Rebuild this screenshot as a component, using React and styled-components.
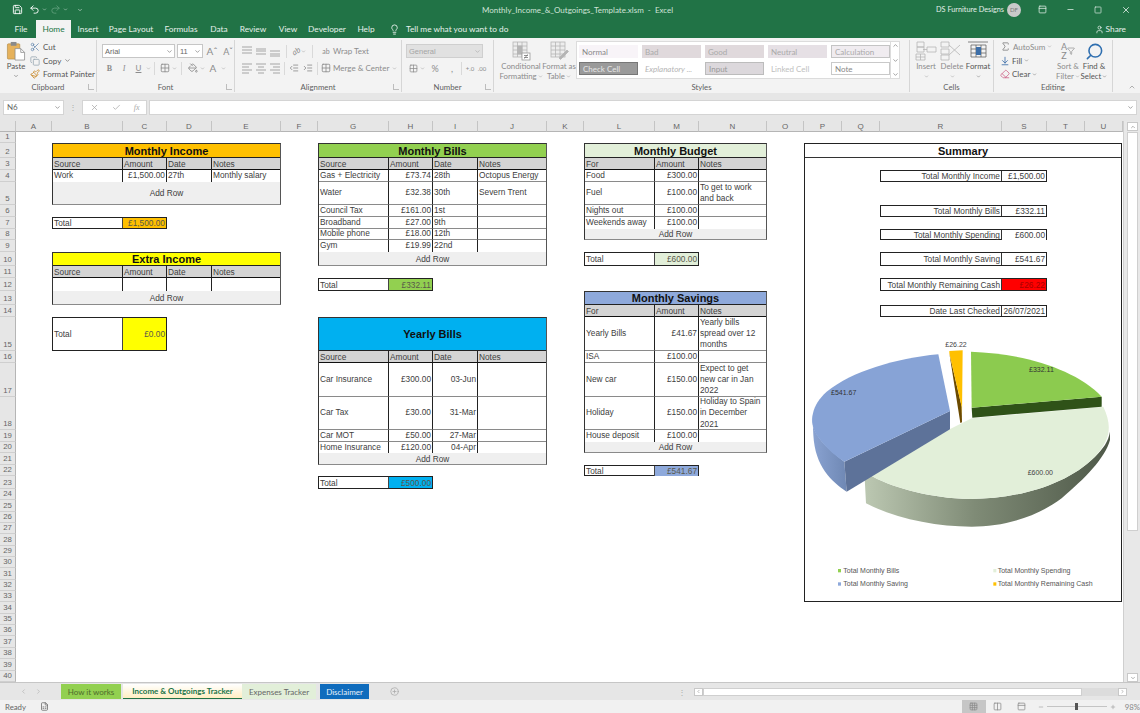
import React from 'react'
import styled, { createGlobalStyle } from 'styled-components'
import {
  Save, Undo2, Redo2, Lightbulb, Scissors, Copy, Paintbrush, ChevronDown, ChevronUp, X, Check, Minus, Plus,
  User, Grid2x2, PaintBucket, IndentDecrease, IndentIncrease, Sigma, ArrowDownToLine, Eraser, Search, Square,
  Columns2, Grid3x3, ChevronLeft, ChevronRight, CirclePlus, PanelTop, FileSpreadsheet, Filter,
} from 'lucide-react'

const Global = createGlobalStyle`
  html, body { margin: 0; padding: 0; background: #fff; }
  * { box-sizing: border-box; }
`

const Page = styled.div`
  width: 1140px;
  height: 713px;
  overflow: hidden;
  display: flex;
  flex-direction: column;
  font-family: Lato, "Open Sans", "Liberation Sans", sans-serif;
`

const TitleBar = styled.div`
  height: 19px;
  background: #217346;
  color: #cfe3d7;
  display: flex;
  align-items: center;
  font-size: 8px;
`

const Qat = styled.div`
  width: 483px;
  display: flex;
  align-items: center;
  padding-left: 9px;
  color: #fff;
`

const DocName = styled.div`
  width: 455px;
  white-space: pre;
`

const WindowTools = styled.div`
  flex: 1;
  display: flex;
  align-items: center;
  color: #e3efe8;
  white-space: nowrap;
`

const UserName = styled.div`
  width: 65px;
  font-size: 7.3px;
`

const Avatar = styled.div`
  width: 14px;
  height: 14px;
  border-radius: 50%;
  background: #c9c9c9;
  color: #777;
  font-size: 6px;
  display: flex;
  align-items: center;
  justify-content: center;
  margin: 0 7px 0 6px;
`

const WinBtn = styled.div`
  width: 28px;
  display: flex;
  justify-content: center;
`

const TabStrip = styled.div`
  height: 19px;
  background: #217346;
  display: flex;
  align-items: flex-end;
  padding-left: 6px;
  color: #e6f0ea;
  font-size: 8.3px;
`

const RibbonTab = styled.div`
  height: 18px;
  display: flex;
  align-items: center;
  justify-content: center;
  width: ${p => p.$w}px;
  background: ${p => (p.$active ? '#f3f3f3' : 'transparent')};
  color: ${p => (p.$active ? '#217346' : 'inherit')};
  white-space: nowrap;
`

const TellMe = styled.div`
  display: flex;
  align-items: center;
  gap: 6px;
  height: 18px;
  margin-left: 8px;
  flex: 1;
`

const ShareBtn = styled.div`
  display: flex;
  align-items: center;
  gap: 2px;
  height: 18px;
  margin-right: 14px;
`

const Ribbon = styled.div`
  height: 55px;
  background: #f3f3f3;
  display: flex;
  color: #8c8c8c;
  font-size: 8px;
`

const Group = styled.div`
  position: relative;
  width: ${p => p.$w}px;
  flex: none;
  border-right: 1px solid #d6d6d6;
  margin: 2px 0 1px;
  display: flex;
  flex-direction: column;
`

const GroupBody = styled.div`
  height: 41px;
  display: flex;
  padding: 4px 0 0 ${p => p.$pad || 0}px;
  gap: ${p => p.$gap || 0}px;
`

const GroupLabel = styled.div`
  flex: 1;
  display: flex;
  align-items: center;
  justify-content: center;
  color: #5f5f5f;
  font-size: 7.8px;
`

const Launcher = styled.div`
  position: absolute;
  right: 2px;
  bottom: 2px;
  width: 6px;
  height: 6px;
  border-left: 1px solid #bdbdbd;
  border-bottom: 1px solid #bdbdbd;
`

const Collapse = styled.div`
  align-self: flex-end;
  margin: 0 0 2px 15px;
  color: #8c8c8c;
  display: flex;
`

const Stack = styled.div`
  display: flex;
  flex-direction: column;
  gap: ${p => p.$gap ?? 3}px;
  margin-top: ${p => p.$top || 0}px;
  width: ${p => (p.$w ? `${p.$w}px` : 'auto')};
  flex: none;
`

const ToolRow = styled.div`
  display: flex;
  align-items: center;
  height: 14px;
  gap: ${p => p.$gap || 0}px;
  color: ${p => (p.$on ? '#555' : 'inherit')};
  white-space: nowrap;
`

const Tool = styled.div`
  width: ${p => p.$w || 14}px;
  flex: none;
  display: flex;
  align-items: center;
  justify-content: center;
  font-family: ${p => (p.$serif ? '"Liberation Serif", serif' : 'inherit')};
  font-weight: ${p => (p.$bold ? 700 : 400)};
  font-style: ${p => (p.$italic ? 'italic' : 'normal')};
  text-decoration: ${p => (p.$under ? 'underline' : 'none')};
  font-size: ${p => p.$size || 8}px;
`

const OrientTool = styled(Tool)`
  transform: rotate(-35deg);
`

const Sep = styled.div`
  width: 1px;
  height: 13px;
  flex: none;
  background: #d9d9d9;
  margin: 0 ${p => p.$m ?? 3}px;
`

const Select = styled.div`
  width: ${p => p.$w}px;
  height: 14px;
  flex: none;
  border: 1px solid ${p => (p.$off ? '#cfcfcf' : '#c6c6c6')};
  background: ${p => (p.$off ? '#e1e1e1' : '#fff')};
  color: ${p => (p.$off ? '#a5a5a5' : '#666')};
  display: flex;
  align-items: center;
  justify-content: space-between;
  padding: 0 1px 0 2px;
  font-family: "Liberation Sans", sans-serif;
  font-size: 7.5px;
`

const BigTool = styled.div`
  width: ${p => p.$w}px;
  flex: none;
  margin-top: -3px;
  display: flex;
  flex-direction: column;
  align-items: center;
  line-height: 9.5px;
  font-size: 7.8px;
  white-space: nowrap;
  color: ${p => (p.$on ? '#555' : 'inherit')};
`

const BigIcon = styled.div`
  height: 20px;
  display: flex;
  align-items: center;
  justify-content: center;
  margin-bottom: 1px;
`

const BigLine = styled.div`
  height: 9.5px;
  display: flex;
  align-items: center;
  justify-content: center;
  gap: 1px;
`

const SortLetters = styled.div`
  display: flex;
  flex-direction: column;
  align-items: center;
  font-size: 9px;
  line-height: 9px;
`

const FlippedSearch = styled(Search)`
  transform: scaleX(-1);
`

const Gallery = styled.div`
  width: 324px;
  height: 38px;
  flex: none;
  background: #fff;
  border: 1px solid #dcdcdc;
  display: flex;
  margin-top: -3px;
`

const GalleryGrid = styled.div`
  flex: 1;
  display: grid;
  grid-template-columns: repeat(5, 59px);
  grid-template-rows: 13px 13px;
  column-gap: 4px;
  row-gap: 4px;
  padding: 3px 0 0 2px;
`

const StyleCell = styled.div`
  font-size: 8px;
  display: flex;
  align-items: center;
  padding-left: 3px;
  overflow: hidden;
  white-space: nowrap;
  background: ${p => p.$bg || '#fff'};
  color: ${p => p.$fg || '#aaa'};
  border: ${p => (p.$line ? `1px solid ${p.$line}` : 'none')};
  font-style: ${p => (p.$italic ? 'italic' : 'normal')};
`

const GalleryScroll = styled.div`
  width: 10px;
  border-left: 1px solid #dcdcdc;
  display: flex;
  flex-direction: column;
  align-items: center;
  justify-content: space-between;
  color: #666;
`

const FormulaBar = styled.div`
  height: 28px;
  background: #e6e6e6;
  display: flex;
  align-items: center;
  padding: 0 3px;
  color: #666;
  font-size: 8px;
`

const NameBox = styled.div`
  width: 61px;
  height: 15px;
  background: #fff;
  border: 1px solid #d4d4d4;
  display: flex;
  align-items: center;
  justify-content: space-between;
  padding: 0 2px 0 3px;
`

const Dots = styled.div`
  width: 18px;
  text-align: center;
  color: #aaa;
`

const FnBox = styled.div`
  width: 65px;
  height: 15px;
  background: #fff;
  border: 1px solid #d4d4d4;
  display: flex;
  align-items: center;
  justify-content: space-around;
  color: #a8a8a8;
  font-family: "Liberation Serif", serif;
  font-style: italic;
  margin-right: 2px;
`

const FormulaInput = styled.div`
  flex: 1;
  height: 15px;
  background: #fff;
  border: 1px solid #d4d4d4;
  display: flex;
  align-items: center;
  justify-content: flex-end;
  padding-right: 2px;
`

const SheetArea = styled.div`
  height: 561px;
  display: flex;
  background: #fff;
`

const SheetGrid = styled.div`
  display: grid;
  grid-template-columns: 16px 36px 71px 44px 45px 69px 37px 71px 44px 45px 69px 37px 71px 44px 68px 37px 38px 38px 122px 45px 38px 38px;
  grid-template-rows: 11px 11px 15px 12px 12px 23px 12px 12px 11px 12px 14px 12px 13px 14px 12px 34px 12px 34px 33px 12px 11px 12px 11px 13px repeat(17, 11.35px);
  font-family: "Liberation Sans", sans-serif;
  font-size: 8.3px;
  color: #404040;
`

const ColHead = styled.div`
  grid-row: 1;
  background: #e6e6e6;
  border-right: 1px solid #c4c4c4;
  border-bottom: 1px solid #b5b5b5;
  color: #666;
  font-size: 8px;
  display: flex;
  align-items: center;
  justify-content: center;
`

const Corner = styled(ColHead)`
  grid-column: 1;
`

const RowHead = styled.div`
  grid-column: 1;
  grid-row: ${p => p.$n + 1};
  background: #e6e6e6;
  border-right: 1px solid #b5b5b5;
  border-bottom: 1px solid #cfcfcf;
  color: #666;
  font-size: 7.8px;
  line-height: 10px;
  display: flex;
  align-items: flex-end;
  justify-content: center;
`

const TableBlock = styled.div`
  grid-column: ${p => p.$col} / span ${p => p.$cols};
  grid-row: ${p => p.$row} / span ${p => p.$rows};
  display: grid;
  grid-template-columns: subgrid;
  grid-template-rows: subgrid;
  border: 1px solid #333;
  border-bottom-color: #8a8a8a;
  border-right-color: #555;
`

const TitleCell = styled.div`
  grid-column: 1 / -1;
  background: ${p => p.$bg};
  border-bottom: 1px solid #222;
  color: #111;
  font-size: 11px;
  font-weight: 700;
  display: flex;
  align-items: center;
  justify-content: center;
`

const HeadCell = styled.div`
  background: #d4d4d4;
  border-bottom: 1px solid #111;
  border-right: ${p => (p.$last ? 'none' : '1px solid #222')};
  padding: 0 1px;
  display: flex;
  align-items: center;
  white-space: nowrap;
`

const Cell = styled.div`
  background: #fff;
  border-right: ${p => (p.$last ? 'none' : '1px solid #222')};
  border-bottom: ${p => (p.$end ? 'none' : '1px solid #8a8a8a')};
  padding: 0 1px;
  display: flex;
  align-items: center;
  justify-content: ${p => (p.$right ? 'flex-end' : 'flex-start')};
  line-height: 11.2px;
  overflow: hidden;
`

const AddRow = styled.div`
  grid-column: 1 / -1;
  background: #efefef;
  display: flex;
  align-items: center;
  justify-content: center;
`

const TotalBlock = styled.div`
  grid-column: ${p => p.$col} / span 2;
  grid-row: ${p => p.$row};
  display: grid;
  grid-template-columns: subgrid;
  border: 1px solid #222;
`

const TotalLabel = styled.div`
  border-right: 1px solid #444;
  padding: 0 1px;
  display: flex;
  align-items: center;
`

const TotalValue = styled.div`
  background: ${p => p.$bg};
  color: #58584a;
  padding: 0 1px;
  display: flex;
  align-items: center;
  justify-content: flex-end;
`

const Summary = styled.div`
  grid-column: 17 / span 6;
  grid-row: 3 / span 32;
  display: grid;
  grid-template-columns: subgrid;
  grid-template-rows: subgrid;
  border: 1px solid #222;
  margin-right: 1px;
`

const SummaryTitle = styled.div`
  grid-column: 1 / -1;
  grid-row: 1;
  border-bottom: 1px solid #333;
  color: #111;
  font-size: 11px;
  font-weight: 700;
  display: flex;
  align-items: center;
  justify-content: center;
`

const SummaryLine = styled.div`
  grid-column: 3 / span 2;
  grid-row: ${p => p.$line};
  display: grid;
  grid-template-columns: subgrid;
  border: 1px solid #222;
`

const SummaryLabel = styled.div`
  border-right: 1px solid #333;
  padding-right: 1px;
  display: flex;
  align-items: center;
  justify-content: flex-end;
`

const SummaryValue = styled.div`
  background: ${p => p.$bg || '#fff'};
  color: ${p => p.$fg || '#404040'};
  padding-right: 1px;
  display: flex;
  align-items: center;
  justify-content: flex-end;
`

const ChartWrap = styled.svg`
  grid-column: 1 / -1;
  grid-row: 14 / -1;
  align-self: end;
  width: 316px;
  height: 266px;
  font-family: "Liberation Sans", sans-serif;
  font-size: 21px;
`

const VScroll = styled.div`
  flex: 1;
  background: #e8e8e8;
  border-left: 1px solid #cfcfcf;
  display: flex;
  flex-direction: column;
  padding: 1px 2px 0 3px;
`

const ScrollBtn = styled.div`
  height: ${p => p.$h || 9}px;
  width: ${p => p.$w || 'auto'};
  flex: none;
  background: #fff;
  border: 1px solid #c8c8c8;
  display: flex;
  align-items: center;
  justify-content: center;
  color: #666;
`

const VThumb = styled.div`
  height: 399px;
  margin-top: 1px;
  background: #fff;
  border: 1px solid #cfcfcf;
`

const VTrack = styled.div`
  flex: 1;
`

const SheetTabs = styled.div`
  height: 18px;
  background: #e6e6e6;
  border-top: 1px solid #c6c6c6;
  display: flex;
  align-items: center;
  font-size: 8px;
  color: #aaa;
`

const TabNav = styled.div`
  width: 61px;
  display: flex;
  justify-content: center;
  gap: 8px;
`

const SheetTab = styled.div`
  width: ${p => p.$w}px;
  height: 15px;
  margin-right: ${p => p.$gap || 0}px;
  flex: none;
  background: ${p => p.$bg};
  color: ${p => p.$fg};
  font-weight: ${p => (p.$active ? 700 : 400)};
  border-bottom: ${p => (p.$active ? '1px solid #217346' : 'none')};
  display: flex;
  align-items: center;
  justify-content: center;
  white-space: nowrap;
`

const AddSheet = styled.div`
  margin-left: 21px;
  width: 304px;
  padding-right: 8px;
  display: flex;
  align-items: center;
  justify-content: space-between;
`

const HScroll = styled.div`
  width: 433px;
  height: 8px;
  display: flex;
  background: #dcdcdc;
`

const HThumb = styled.div`
  width: 379px;
  background: #fff;
  border: 1px solid #cfcfcf;
`

const HTrack = styled.div`
  flex: 1;
`

const StatusBar = styled.div`
  height: 13px;
  flex: 1;
  background: #f1f1f1;
  display: flex;
  align-items: center;
  color: #666;
  font-size: 7.8px;
  padding-left: 5px;
`

const StatusLeft = styled.div`
  width: 957px;
  display: flex;
  align-items: center;
  gap: 14px;
`

const ViewBtn = styled.div`
  width: ${p => p.$w || 24}px;
  height: 13px;
  background: ${p => (p.$on ? '#c6c6c6' : 'transparent')};
  display: flex;
  align-items: center;
  justify-content: center;
  color: #8a8a8a;
`

const Zoom = styled.div`
  display: flex;
  align-items: center;
  margin-left: 4px;
  color: #888;
  gap: 3px;
`

const ZoomValue = styled.span`
  margin-left: 6px;
`

const Slider = styled.div`
  width: 60px;
  height: 1px;
  background: #c4c4c4;
  display: flex;
  justify-content: center;
  align-items: center;
`

const SliderKnob = styled.div`
  width: 3px;
  height: 7px;
  background: #555;
`

const cols = ['A', 'B', 'C', 'D', 'E', 'F', 'G', 'H', 'I', 'J', 'K', 'L', 'M', 'N', 'O', 'P', 'Q', 'R', 'S', 'T', 'U']
const rowNumbers = Array.from({ length: 40 }, (_, i) => i + 1)

const orange = '#ffc000'
const yellow = '#ffff00'
const green = '#92d050'
const sky = '#00b0f0'
const pale = '#e2efd9'
const blue = '#8ea9db'

const tables = [
  {
    col: 3, row: 3, title: 'Monthly Income', color: orange,
    heads: ['Source', 'Amount', 'Date', 'Notes'],
    rows: [['Work', '£1,500.00', '27th', 'Monthly salary']],
  },
  {
    col: 3, row: 11, title: 'Extra Income', color: yellow,
    heads: ['Source', 'Amount', 'Date', 'Notes'],
    rows: [['', '', '', '']],
  },
  {
    col: 8, row: 3, title: 'Monthly Bills', color: green,
    heads: ['Source', 'Amount', 'Date', 'Notes'],
    rows: [
      ['Gas + Electricity', '£73.74', '28th', 'Octopus Energy'],
      ['Water', '£32.38', '30th', 'Severn Trent'],
      ['Council Tax', '£161.00', '1st', ''],
      ['Broadband', '£27.00', '9th', ''],
      ['Mobile phone', '£18.00', '12th', ''],
      ['Gym', '£19.99', '22nd', ''],
    ],
  },
  {
    col: 8, row: 16, title: 'Yearly Bills', color: sky, rightDate: true,
    heads: ['Source', 'Amount', 'Date', 'Notes'],
    rows: [
      ['Car Insurance', '£300.00', '03-Jun', ''],
      ['Car Tax', '£30.00', '31-Mar', ''],
      ['Car MOT', '£50.00', '27-Mar', ''],
      ['Home Insurance', '£120.00', '04-Apr', ''],
    ],
  },
  {
    col: 13, row: 3, title: 'Monthly Budget', color: pale,
    heads: ['For', 'Amount', 'Notes'],
    rows: [
      ['Food', '£300.00', ''],
      ['Fuel', '£100.00', 'To get to work and back'],
      ['Nights out', '£100.00', ''],
      ['Weekends away', '£100.00', ''],
    ],
  },
  {
    col: 13, row: 14, title: 'Monthly Savings', color: blue,
    heads: ['For', 'Amount', 'Notes'],
    rows: [
      ['Yearly Bills', '£41.67', 'Yearly bills spread over 12 months'],
      ['ISA', '£100.00', ''],
      ['New car', '£150.00', 'Expect to get new car in Jan 2022'],
      ['Holiday', '£150.00', 'Holiday to Spain in December 2021'],
      ['House deposit', '£100.00', ''],
    ],
  },
]

const totals = [
  { col: 3, row: 8, value: '£1,500.00', color: orange },
  { col: 3, row: 16, value: '£0.00', color: yellow },
  { col: 8, row: 13, value: '£332.11', color: green },
  { col: 8, row: 24, value: '£500.00', color: sky },
  { col: 13, row: 11, value: '£600.00', color: pale },
  { col: 13, row: 23, value: '£541.67', color: blue },
]

const summaryLines = [
  { line: 3, label: 'Total Monthly Income', value: '£1,500.00' },
  { line: 5, label: 'Total Monthly Bills', value: '£332.11' },
  { line: 7, label: 'Total Monthly Spending', value: '£600.00' },
  { line: 9, label: 'Total Monthly Saving', value: '£541.67' },
  { line: 11, label: 'Total Monthly Remaining Cash', value: '£26.22', bg: '#ff0000', fg: '#a80000' },
  { line: 13, label: 'Date Last Checked', value: '26/07/2021' },
]

const galleryStyles = [
  { text: 'Normal', bg: '#f8f4f8', fg: '#888' },
  { text: 'Bad', bg: '#e0d9dc' },
  { text: 'Good', bg: '#e0d9dc' },
  { text: 'Neutral', bg: '#e6e0e5' },
  { text: 'Calculation', bg: '#f0ecf0', line: '#c4c4c4' },
  { text: 'Check Cell', bg: '#9a9a9a', fg: '#e6e6e6', line: '#777' },
  { text: 'Explanatory ...', fg: '#b5b5b5', italic: true },
  { text: 'Input', bg: '#dcd8dc', fg: '#999', line: '#bcbcbc' },
  { text: 'Linked Cell', fg: '#c0c0c0' },
  { text: 'Note', fg: '#888', line: '#c9c9c9' },
]

const Caret = ({ size = 7 }) => <ChevronDown size={size} strokeWidth={2} />

// text-alignment glyphs, each line is [x1, x2, y]
const Lines = ({ lines }) => (
  <svg width="12" height="12" viewBox="0 0 12 12" stroke="#a5a5a5" strokeWidth="1">
    {lines.map(([a, b, y]) => <line key={y} x1={a} x2={b} y1={y} y2={y} />)}
  </svg>
)

const PasteIcon = () => (
  <svg width="20" height="20" viewBox="0 0 20 21">
    <rect x="1" y="3" width="13" height="16" rx="1" fill="#e6b25c" stroke="#a8823e" strokeWidth=".6" />
    <rect x="4.5" y="1" width="6" height="4" fill="#8a8a8a" />
    <path d="M9 8h6l4 4v8H9z" fill="#fff" stroke="#8a8a8a" strokeWidth=".8" />
    <path d="M15 8v4h4" fill="none" stroke="#8a8a8a" strokeWidth=".8" />
  </svg>
)

const SheetIcon = ({ mark, w = 20 }) => (
  <svg width={w} height="20" viewBox="0 0 20 20" stroke="#b5b5b5" strokeWidth=".8" fill="none">
    <rect x="2" y="1" width="14" height="15" fill="#ededed" />
    <path d="M2 5h14M2 9h14M2 13h14M6.5 1v15M11 1v15" />
    {mark === 'cf' && <rect x="6.5" y="5" width="4.5" height="8" fill="#b5b5b5" />}
    {mark === 'cf' && <rect x="11" y="12" width="8" height="7" fill="#fff" stroke="#999" />}
    {mark === 'cf' && <path d="M13 14.5h4M13 16.5h4M16.5 13.5l-3 4" stroke="#777" />}
    {mark === 'table' && <path d="M10 17l8-8 1.5 1.5-8 8z" fill="#b5b5b5" />}
  </svg>
)

const CellsIcon = ({ mark }) => (
  <svg width="26" height="20" viewBox="0 0 26 20" fill="none" stroke={mark === 'format' ? '#666' : '#b5b5b5'} strokeWidth=".8">
    {mark === 'insert' && <path d="M4 1h7v5H4zM4 6h7v5H4zM3 13h9v6H3zM7.5 13v6M3 16h9M14 6h9v5h-9zM14 8.5h-4" />}
    {mark === 'delete' && <path d="M2 1h8v5H2zM2 8h8v5H2zM2 14h8v5H2zM10 4l11 10M21 4L10 14" />}
    {mark === 'format' && (
      <>
        <path d="M6 4h15v12H6zM6 8h15M6 12h15M11 4v12M16 4v12M3 1h20" />
        <rect x="11" y="6" width="5" height="8" fill="#3c6ea8" stroke="none" />
      </>
    )}
  </svg>
)

const Table = ({ col, row, title, color, heads, rows, rightDate }) => (
  <TableBlock $col={col} $cols={heads.length === 4 ? 4 : 3} $row={row} $rows={rows.length + 3}>
    <TitleCell $bg={color}>{title}</TitleCell>
    {heads.map((h, i) => <HeadCell key={h} $last={i === heads.length - 1}>{h}</HeadCell>)}
    {rows.map((r, ri) => r.map((text, ci) => (
      <Cell
        key={`${ri}-${ci}`}
        $last={ci === r.length - 1}
        $end={ri === rows.length - 1}
        $right={ci === 1 || (rightDate && ci === 2)}
      >
        {text}
      </Cell>
    )))}
    <AddRow>Add Row</AddRow>
  </TableBlock>
)

const Chart = () => (
  <ChartWrap viewBox="30 0 948 798">
    <defs>
      <linearGradient id="spendWall" x1="0" x2="1" y1="0" y2="0">
        <stop offset="0" stopColor="#bcc8b2" />
        <stop offset=".45" stopColor="#7f8b76" />
        <stop offset="1" stopColor="#4e5848" />
      </linearGradient>
      <linearGradient id="saveWall" x1="0" x2="1" y1="0" y2="0">
        <stop offset="0" stopColor="#8aa3d2" />
        <stop offset="1" stopColor="#6f88b4" />
      </linearGradient>
    </defs>
    <path d="M208 410C270 450 370 480 480 490C620 500 800 465 900 365C925 340 940 320 945 290L945 315C930 370 870 430 800 490C720 550 620 575 530 575C420 575 300 550 213 505Z" fill="url(#spendWall)" />
    <path d="M530 250L925 215C950 270 950 310 900 365C800 465 620 500 480 490C370 480 270 450 208 410Z" fill={pale} />
    <path d="M52 240C45 280 70 320 148 380L155 470C110 440 60 395 55 300Z" fill="url(#saveWall)" />
    <path d="M148 380L465 228L465 283L155 470Z" fill="#5d7299" />
    <path d="M465 228L430 58C300 70 170 110 95 170C50 210 40 260 65 300C85 330 115 360 148 380Z" fill="#87a3d6" />
    <path d="M463 55L496 264L501 262L500 215Z" fill="#6b4a00" />
    <path d="M463 48L503 46L501 240L500 215L463 55Z" fill={orange} />
    <path d="M530 218L920 185L920 215L532 248Z" fill="#2f5218" />
    <path d="M528 50C680 55 840 100 920 185L530 218Z" fill="#8ccb4f" />
    <text x="483" y="36" textAnchor="middle" fill="#444">£26.22</text>
    <text x="702" y="110" fill="#333">£332.11</text>
    <text x="108" y="179" fill="#333">£541.67</text>
    <text x="698" y="420" fill="#444">£600.00</text>
    <rect x="129" y="702" width="9" height="10" fill={green} />
    <text x="145" y="714" fill="#555">Total Monthly Bills</text>
    <rect x="595" y="702" width="9" height="10" fill={pale} />
    <text x="608" y="714" fill="#555">Total Monthly Spending</text>
    <rect x="129" y="742" width="9" height="10" fill={blue} />
    <text x="145" y="753" fill="#555">Total Monthly Saving</text>
    <rect x="595" y="742" width="9" height="10" fill={orange} />
    <text x="608" y="753" fill="#555">Total Monthly Remaining Cash</text>
  </ChartWrap>
)

export default function App() {
  return (
    <Page>
      <Global />
      <TitleBar>
        <Qat>
          <Tool $w={17}><Save size={11} /></Tool>
          <Tool $w={16}><Undo2 size={11} /></Tool>
          <Caret size={5} />
          <Tool $w={16}><Redo2 size={11} color="#5c9c78" /></Tool>
          <Caret size={5} />
          <Tool $w={24}><Caret size={6} /></Tool>
        </Qat>
        <DocName>Monthly_Income_&amp;_Outgoings_Template.xlsm  -  Excel</DocName>
        <WindowTools>
          <UserName>DS Furniture Designs</UserName>
          <Avatar>DF</Avatar>
          <WinBtn><PanelTop size={9} /></WinBtn>
          <WinBtn><Minus size={9} /></WinBtn>
          <WinBtn><Square size={8} /></WinBtn>
          <WinBtn><X size={10} /></WinBtn>
        </WindowTools>
      </TitleBar>

      <TabStrip>
        <RibbonTab $w={30}>File</RibbonTab>
        <RibbonTab $w={35} $active>Home</RibbonTab>
        <RibbonTab $w={34}>Insert</RibbonTab>
        <RibbonTab $w={52}>Page Layout</RibbonTab>
        <RibbonTab $w={48}>Formulas</RibbonTab>
        <RibbonTab $w={28}>Data</RibbonTab>
        <RibbonTab $w={40}>Review</RibbonTab>
        <RibbonTab $w={30}>View</RibbonTab>
        <RibbonTab $w={48}>Developer</RibbonTab>
        <RibbonTab $w={30}>Help</RibbonTab>
        <TellMe><Lightbulb size={11} />Tell me what you want to do</TellMe>
        <ShareBtn><User size={9} />Share</ShareBtn>
      </TabStrip>

      <Ribbon>
        <Group $w={97}>
          <GroupBody $pad={6} $gap={4}>
            <BigTool $w={20} $on>
              <BigIcon><PasteIcon /></BigIcon>
              <BigLine>Paste</BigLine>
              <BigLine><Caret size={6} /></BigLine>
            </BigTool>
            <Stack $gap={0} $top={-4}>
              <ToolRow $on $gap={3}><Scissors size={10} color="#6f8fb5" />Cut</ToolRow>
              <ToolRow $on $gap={3}><Copy size={10} color="#9aa9b5" />Copy<Caret /></ToolRow>
              <ToolRow $on $gap={3}><Paintbrush size={10} color="#c98a2b" />Format Painter</ToolRow>
            </Stack>
          </GroupBody>
          <GroupLabel>Clipboard</GroupLabel>
          <Launcher />
        </Group>

        <Group $w={138}>
          <GroupBody $pad={5}>
            <Stack>
              <ToolRow $gap={2}>
                <Select $w={73}>Arial<Caret /></Select>
                <Select $w={26}>11<Caret /></Select>
                <Tool $size={10}>Aˆ</Tool>
                <Tool $size={9}>Aˇ</Tool>
              </ToolRow>
              <ToolRow>
                <Tool $bold $w={15} $serif>B</Tool>
                <Tool $italic $w={14} $serif>I</Tool>
                <Tool $under $w={15}>U</Tool>
                <Caret size={5} />
                <Sep />
                <Tool><Grid2x2 size={10} /></Tool>
                <Caret size={5} />
                <Sep $m={4} />
                <Tool><PaintBucket size={10} /></Tool>
                <Caret size={5} />
                <Tool $size={10} $w={16}>A</Tool>
                <Caret size={5} />
              </ToolRow>
            </Stack>
          </GroupBody>
          <GroupLabel>Font</GroupLabel>
          <Launcher />
        </Group>

        <Group $w={167}>
          <GroupBody $pad={5}>
            <Stack>
              <ToolRow>
                <Tool><Lines lines={[[1, 11, 2], [1, 11, 5], [1, 11, 8]]} /></Tool>
                <Tool><Lines lines={[[1, 11, 4], [1, 11, 6], [1, 11, 9]]} /></Tool>
                <Tool><Lines lines={[[1, 11, 6], [1, 11, 9], [1, 11, 11]]} /></Tool>
                <Sep $m={4} />
                <OrientTool $italic $size={8} $w={10}>ab</OrientTool>
                <Caret size={5} />
                <Sep $m={6} />
                <Tool $size={7}>ab</Tool>
                <span>Wrap Text</span>
              </ToolRow>
              <ToolRow>
                <Tool><Lines lines={[[1, 11, 2], [1, 8, 5], [1, 11, 8], [1, 8, 11]]} /></Tool>
                <Tool><Lines lines={[[1, 11, 2], [3, 9, 5], [1, 11, 8], [3, 9, 11]]} /></Tool>
                <Tool><Lines lines={[[1, 11, 2], [4, 11, 5], [1, 11, 8], [4, 11, 11]]} /></Tool>
                <Sep $m={2} />
                <Tool><IndentDecrease size={10} /></Tool>
                <Tool><IndentIncrease size={10} /></Tool>
                <Sep $m={1.5} />
                <Tool><Grid2x2 size={10} /></Tool>
                <span>Merge &amp; Center</span>
                <Tool $w={10}><Caret size={5} /></Tool>
              </ToolRow>
            </Stack>
          </GroupBody>
          <GroupLabel>Alignment</GroupLabel>
          <Launcher />
        </Group>

        <Group $w={92}>
          <GroupBody $pad={4}>
            <Stack>
              <Select $w={77} $off>General<Caret /></Select>
              <ToolRow>
                <Tool><Grid2x2 size={9} /></Tool>
                <Caret size={5} />
                <Tool $size={9} $w={20}>%</Tool>
                <Tool $size={9}>,</Tool>
                <Sep $m={2} />
                <Tool $size={6} $w={12}>+.0</Tool>
                <Tool $size={6} $w={12}>.00</Tool>
              </ToolRow>
            </Stack>
          </GroupBody>
          <GroupLabel>Number</GroupLabel>
          <Launcher />
        </Group>

        <Group $w={416}>
          <GroupBody $pad={6}>
            <BigTool $w={42}>
              <BigIcon><SheetIcon mark="cf" /></BigIcon>
              <BigLine>Conditional</BigLine>
              <BigLine>Formatting<Caret size={5} /></BigLine>
            </BigTool>
            <BigTool $w={34}>
              <BigIcon><SheetIcon mark="table" /></BigIcon>
              <BigLine>Format as</BigLine>
              <BigLine>Table<Caret size={5} /></BigLine>
            </BigTool>
            <Gallery>
              <GalleryGrid>
                {galleryStyles.map(s => (
                  <StyleCell key={s.text} $bg={s.bg} $fg={s.fg} $line={s.line} $italic={s.italic}>{s.text}</StyleCell>
                ))}
              </GalleryGrid>
              <GalleryScroll>
                <ChevronUp size={7} />
                <Caret />
                <Caret />
              </GalleryScroll>
            </Gallery>
          </GroupBody>
          <GroupLabel>Styles</GroupLabel>
        </Group>

        <Group $w={84}>
          <GroupBody $pad={3}>
            <BigTool $w={26}><BigIcon><CellsIcon mark="insert" /></BigIcon><BigLine>Insert</BigLine><BigLine><Caret size={5} /></BigLine></BigTool>
            <BigTool $w={26}><BigIcon><CellsIcon mark="delete" /></BigIcon><BigLine>Delete</BigLine><BigLine><Caret size={5} /></BigLine></BigTool>
            <BigTool $w={26} $on><BigIcon><CellsIcon mark="format" /></BigIcon><BigLine>Format</BigLine><BigLine><Caret size={5} /></BigLine></BigTool>
          </GroupBody>
          <GroupLabel>Cells</GroupLabel>
        </Group>

        <Group $w={119}>
          <GroupBody $pad={6}>
            <Stack $gap={0} $top={-4} $w={55}>
              <ToolRow $gap={2}><Sigma size={11} />AutoSum<Caret size={5} /></ToolRow>
              <ToolRow $gap={2} $on><ArrowDownToLine size={10} color="#3c6ea8" />Fill<Caret size={5} /></ToolRow>
              <ToolRow $gap={2} $on><Eraser size={10} color="#d0688c" />Clear<Caret size={5} /></ToolRow>
            </Stack>
            <BigTool $w={26}>
              <BigIcon><SortLetters><span>A</span><span>Z</span></SortLetters><Filter size={8} /></BigIcon>
              <BigLine>Sort &amp;</BigLine>
              <BigLine>Filter<Caret size={5} /></BigLine>
            </BigTool>
            <BigTool $w={26} $on>
              <BigIcon><FlippedSearch size={19} color="#2f6fb0" /></BigIcon>
              <BigLine>Find &amp;</BigLine>
              <BigLine>Select<Caret size={5} /></BigLine>
            </BigTool>
          </GroupBody>
          <GroupLabel>Editing</GroupLabel>
        </Group>
        <Collapse><ChevronUp size={8} /></Collapse>
      </Ribbon>

      <FormulaBar>
        <NameBox>N6<Caret /></NameBox>
        <Dots>⋮</Dots>
        <FnBox><X size={9} /><Check size={9} /><span>fx</span></FnBox>
        <FormulaInput><Caret /></FormulaInput>
      </FormulaBar>

      <SheetArea>
        <SheetGrid>
          <Corner />
          {cols.map(c => <ColHead key={c}>{c}</ColHead>)}
          {rowNumbers.map(n => <RowHead key={n} $n={n}>{n}</RowHead>)}

          {tables.map(t => <Table key={t.title} {...t} />)}
          {totals.map(t => (
            <TotalBlock key={t.value} $col={t.col} $row={t.row}>
              <TotalLabel>Total</TotalLabel>
              <TotalValue $bg={t.color}>{t.value}</TotalValue>
            </TotalBlock>
          ))}

          <Summary>
            <SummaryTitle>Summary</SummaryTitle>
            {summaryLines.map(s => (
              <SummaryLine key={s.label} $line={s.line}>
                <SummaryLabel>{s.label}</SummaryLabel>
                <SummaryValue $bg={s.bg} $fg={s.fg}>{s.value}</SummaryValue>
              </SummaryLine>
            ))}
            <Chart />
          </Summary>
        </SheetGrid>
        <VScroll>
          <ScrollBtn><ChevronUp size={6} /></ScrollBtn>
          <VThumb />
          <VTrack />
          <ScrollBtn><Caret size={6} /></ScrollBtn>
        </VScroll>
      </SheetArea>

      <SheetTabs>
        <TabNav><ChevronLeft size={7} /><ChevronRight size={7} /></TabNav>
        <SheetTab $w={60} $gap={2} $bg={green} $fg="#4e6b2c">How it works</SheetTab>
        <SheetTab $w={119} $bg="linear-gradient(#fff, #ffeec2)" $fg="#217346" $active>Income &amp; Outgoings Tracker</SheetTab>
        <SheetTab $w={74} $gap={4} $bg={pale} $fg="#666">Expenses Tracker</SheetTab>
        <SheetTab $w={49} $bg="#0f6cbd" $fg="#e8f2fb">Disclaimer</SheetTab>
        <AddSheet><CirclePlus size={9} /><span>⋮</span></AddSheet>
        <HScroll>
          <ScrollBtn $h={8} $w="9px"><ChevronLeft size={5} /></ScrollBtn>
          <HThumb />
          <HTrack />
          <ScrollBtn $h={8} $w="9px"><ChevronRight size={5} /></ScrollBtn>
        </HScroll>
      </SheetTabs>

      <StatusBar>
        <StatusLeft>Ready<FileSpreadsheet size={9} /></StatusLeft>
        <ViewBtn $on><Grid3x3 size={9} /></ViewBtn>
        <ViewBtn><Columns2 size={9} /></ViewBtn>
        <ViewBtn><PanelTop size={9} /></ViewBtn>
        <Zoom>
          <Minus size={6} />
          <Slider><SliderKnob /></Slider>
          <Plus size={6} />
          <ZoomValue>98%</ZoomValue>
        </Zoom>
      </StatusBar>
    </Page>
  )
}
